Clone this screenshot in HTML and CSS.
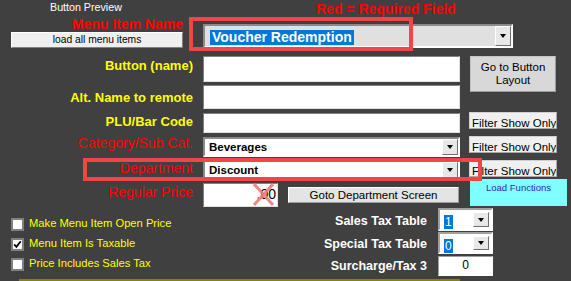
FILE: index.html
```html
<!DOCTYPE html>
<html lang="en">
  <head>
    <meta charset="UTF-8" />
    <title>Menu Item</title>
    <link rel="stylesheet" href="styles.css">
  </head>
  <body>
    <div class="screen">
      <!-- header -->
      <div class="head">
        <span class="preview">Button Preview</span>
        <span class="req-note">Red = Required Field</span>
      </div>

      <!-- menu item name -->
      <div class="name-row">
        <div class="name-left">
          <div class="name-label">Menu Item Name</div>
          <button class="btn load-btn">load all menu items</button>
        </div>
        <div class="combo combo-main">
          <span class="combo-text"><span class="sel">Voucher Redemption</span></span>
          <span class="drop"><i class="arrow"></i></span>
          <div class="req-box req-box-name"></div>
        </div>
      </div>

      <!-- fields -->
      <div class="fields">
        <div class="lbl lbl-yellow pad-2">Button (name)</div>
        <div class="field input in-name"></div>
        <button class="side btn layout-btn">Go to Button<br>Layout</button>

        <div class="lbl lbl-yellow pad-5">Alt. Name to remote</div>
        <div class="field input in-alt"></div>

        <div class="lbl lbl-yellow pad-2">PLU/Bar Code</div>
        <div class="field input in-plu"></div>
        <div class="side btn filter-btn">Filter Show Only</div>

        <div class="lbl lbl-red">Category/Sub Cat.</div>
        <div class="field combo combo-field combo-cat">
          <span class="combo-text">Beverages</span>
          <span class="drop"><i class="arrow"></i></span>
        </div>
        <div class="side btn filter-btn">Filter Show Only</div>

        <div class="lbl lbl-red pad-1">Department</div>
        <div class="field combo combo-field">
          <span class="combo-text">Discount</span>
          <span class="drop"><i class="arrow"></i></span>
          <div class="req-box req-box-dept"></div>
        </div>
        <div class="side btn filter-btn">Filter Show Only</div>

        <div class="lbl lbl-red pad-6">Regular Price</div>
        <div class="field price-cell">
          <div class="price-input">
            .00
            <svg class="price-x" width="21" height="23" viewBox="0 0 21 23">
              <line x1="1" y1="1" x2="20" y2="22" />
              <line x1="20" y1="1" x2="1" y2="22" />
            </svg>
          </div>
          <button class="btn goto-btn">Goto Department Screen</button>
        </div>
        <div class="side load-fn">Load Functions</div>
      </div>

      <!-- checkboxes and tax -->
      <div class="lower">
        <div class="checks">
          <div class="check">
            <span class="box"></span>
            <span class="check-label">Make Menu Item Open Price</span>
          </div>
          <div class="check">
            <span class="box">
              <svg width="9" height="9" viewBox="0 0 9 9">
                <polyline points="1.2,4.3 3.4,6.8 7.8,1.2" />
              </svg>
            </span>
            <span class="check-label">Menu Item Is Taxable</span>
          </div>
          <div class="check">
            <span class="box"></span>
            <span class="check-label">Price Includes Sales Tax</span>
          </div>
        </div>

        <div class="tax">
          <div class="tax-label tpad-1">Sales Tax Table</div>
          <div class="select sel-1">
            <span class="sel-val"><span class="hl">1</span></span>
            <span class="drop"><i class="arrow"></i></span>
          </div>
          <div class="tax-label tpad-2">Special Tax Table</div>
          <div class="select sel-2">
            <span class="sel-val"><span class="hl">0</span></span>
            <span class="drop"><i class="arrow"></i></span>
          </div>
          <div class="tax-label tpad-3">Surcharge/Tax 3</div>
          <div class="surcharge">0</div>
        </div>
      </div>

      <div class="rule"></div>
    </div>
  </body>
</html>
```

FILE: styles.css
```css
* {
  box-sizing: border-box;
}

body {
  margin: 0;
  background: #404040;
  font-family: "Liberation Sans", Arial, sans-serif;
  overflow: hidden;
}

.screen {
  width: 571px;
  height: 281px;
}

/* header */
.head {
  display: flex;
  height: 17px;
}
.preview {
  width: 316px;
  padding-left: 50px;
  font-size: 10.7px;
  line-height: 14px;
  color: #fff;
}
.req-note {
  margin-top: 1px;
  font-size: 14px;
  font-weight: bold;
  line-height: 16px;
  color: #f00;
}

/* buttons */
.btn {
  margin: 0;
  padding: 0;
  font-family: inherit;
  color: #000;
  background: #f0f0f0;
  border: 1px solid;
  border-color: #fff #808080 #808080 #fff;
  cursor: default;
}

/* menu item name row */
.name-row {
  display: flex;
  height: 34px;
}
.name-left {
  width: 183px;
  padding-left: 11px;
}
.name-label {
  font-size: 14px;
  font-weight: bold;
  line-height: 15px;
  color: #f00;
  text-align: right;
}
.load-btn {
  display: block;
  width: 172px;
  height: 16px;
  font-size: 10.3px;
  line-height: 14px;
  background: #efefef;
}

/* combos */
.combo {
  position: relative;
  display: flex;
  background: #fff;
  border: 2px solid;
  border-color: #8a8a8a #fff #fff #8a8a8a;
}
.combo-main {
  margin: 7px 0 0 20px;
  width: 310px;
  height: 24px;
  background: #e0e0e0;
}
.combo-main .combo-text {
  padding: 2px 0 0 5px;
}
.sel {
  display: inline-block;
  padding: 0 2px;
  background: #0078d7;
  color: #fff;
  font-size: 14px;
  font-weight: bold;
  line-height: 15px;
}
.combo-text {
  flex: 1;
}
.combo-field {
  width: 257px;
  height: 20px;
}
.combo-field .combo-text {
  padding-left: 4px;
  font-size: 11.5px;
  font-weight: bold;
  line-height: 16px;
  color: #000;
}
.combo-cat {
  margin-top: 1px;
}
.drop {
  display: flex;
  align-items: center;
  justify-content: center;
  width: 16px;
  background: #e8e8e8;
  border: 1px solid;
  border-color: #fff #6f6f6f #6f6f6f #fff;
}
.arrow {
  width: 0;
  height: 0;
  border-left: 3.5px solid transparent;
  border-right: 3.5px solid transparent;
  border-top: 4px solid #000;
}

/* red required outlines */
.req-box {
  position: absolute;
  border: 4px solid #ef4646;
  pointer-events: none;
  z-index: 2;
}
.req-box-name {
  left: -16px;
  top: -9px;
  width: 224px;
  height: 34px;
}
.req-box-dept {
  left: -122px;
  top: -4px;
  width: 399px;
  height: 23px;
}

/* field grid */
.fields {
  display: grid;
  grid-template-columns: 203px 267px 101px;
  grid-template-rows: 29px 27px 24px 24px 19px 28px;
  align-items: start;
  margin-top: 5px;
}
.lbl {
  grid-column: 1;
  padding-right: 10px;
  line-height: 15px;
  text-align: right;
  white-space: nowrap;
}
.lbl-yellow {
  color: #ff0;
  font-size: 13px;
  font-weight: bold;
}
.lbl-red {
  color: #f00;
  font-size: 14px;
}
.pad-1 { padding-top: 1px; }
.pad-2 { padding-top: 2px; }
.pad-5 { padding-top: 5px; }
.pad-6 { padding-top: 6px; }

.field {
  grid-column: 2;
}
.side {
  grid-column: 3;
}

.input {
  width: 257px;
  background: #fff;
  border: 1px solid;
  border-color: #808080 #e0e0e0 #e0e0e0 #808080;
}
.in-name {
  height: 26px;
}
.in-alt {
  height: 24px;
}
.in-plu {
  height: 20px;
  margin-top: 1px;
}

.layout-btn {
  grid-row: span 2;
  width: 86px;
  height: 36px;
  font-size: 11.5px;
  line-height: 13px;
  background: #d8d8d8;
  border-color: #c4c4c4 #9a9a9a #9a9a9a #c4c4c4;
  align-self: start;
}
.filter-btn {
  width: 88px;
  height: 17px;
  margin-left: -1px;
  padding: 4px 0 0 2px;
  overflow: hidden;
  text-align: left;
  white-space: nowrap;
  font-size: 11.5px;
  line-height: 13px;
  border-color: #d0d0d0 #a8a8a8 #a8a8a8 #d0d0d0;
}

/* price row */
.price-cell {
  display: flex;
  align-items: flex-start;
}
.price-input {
  position: relative;
  width: 75px;
  height: 24px;
  margin-top: 4px;
  padding-right: 1px;
  background: #fff;
  border: 1px solid;
  border-color: #808080 #e0e0e0 #e0e0e0 #808080;
  text-align: right;
  font-size: 14px;
  line-height: 20px;
  color: #000;
}
.price-x {
  position: absolute;
  left: 49px;
  top: -1px;
}
.price-x line {
  stroke: #f07c7c;
  stroke-width: 3;
  opacity: 0.9;
}
.goto-btn {
  width: 171px;
  height: 16px;
  margin: 8px 0 0 10px;
  font-size: 11.5px;
  line-height: 13px;
  background: #e4e4e4;
  border-color: #fff #9a9a9a #9a9a9a #fff;
}
.load-fn {
  width: 97px;
  height: 27px;
  padding-top: 3px;
  background: #80ffff;
  color: #2a2ab4;
  font-size: 9.5px;
  line-height: 11px;
  text-align: center;
}

/* lower block */
.lower {
  display: flex;
  height: 72px;
}
.checks {
  padding: 11px 0 0 11px;
}
.check {
  display: flex;
  align-items: flex-start;
  height: 20px;
}
.box {
  display: flex;
  align-items: center;
  justify-content: center;
  width: 13px;
  height: 13px;
  background: #fff;
  border: 2px solid #808080;
}
.box polyline {
  fill: none;
  stroke: #000;
  stroke-width: 1.8;
}
.check-label {
  margin: -1px 0 0 5px;
  color: #ff0;
  font-size: 11.2px;
  line-height: 13px;
}

.tax {
  display: grid;
  grid-template-columns: auto 55px;
  grid-template-rows: 24px 24px 23px;
  column-gap: 11px;
  align-items: start;
  margin: 1px 78px 0 auto;
}
.tax-label {
  color: #fff;
  font-size: 12.5px;
  font-weight: bold;
  line-height: 15px;
  text-align: right;
  white-space: nowrap;
}
.tpad-1 { padding-top: 6px; }
.tpad-2 { padding-top: 5px; }
.tpad-3 { padding-top: 3px; }

.select {
  display: flex;
  padding: 2px;
  background: #fff;
  border: 2px solid;
  border-color: #a0a0a0 #fff #fff #a0a0a0;
}
.sel-1 {
  height: 23px;
}
.sel-2 {
  height: 22px;
}
.sel-val {
  flex: 1;
  padding-left: 2px;
}
.hl {
  display: inline-block;
  padding: 0 1px;
  background: #0078d7;
  color: #fff;
  font-size: 12px;
  line-height: 14px;
}
.surcharge {
  height: 20px;
  background: #fff;
  border: 1px solid;
  border-color: #a0a0a0 #fff #fff #a0a0a0;
  text-align: center;
  font-size: 12px;
  line-height: 16px;
  color: #000;
}

.rule {
  width: 441px;
  height: 2px;
  margin-left: 19px;
  background: #858500;
}
```
